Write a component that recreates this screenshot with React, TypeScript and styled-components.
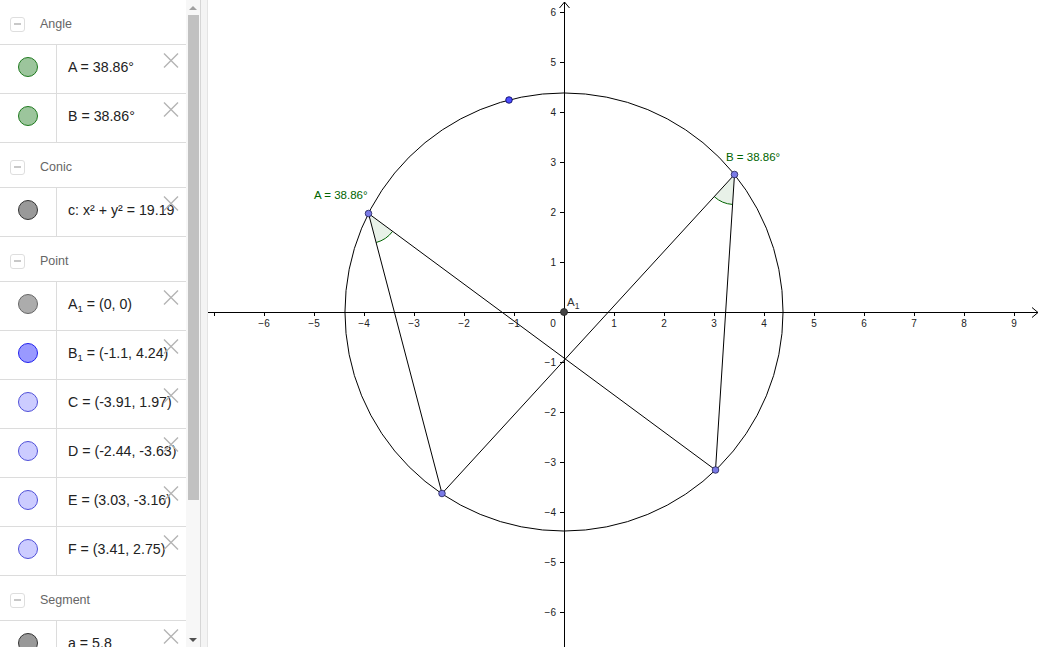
import React from "react";
import styled, { createGlobalStyle } from "styled-components";

const Global = createGlobalStyle`
  html, body { margin: 0; padding: 0; background: #fff; }
  body { font-family: "Liberation Sans", Arial, sans-serif; overflow: hidden; }
  #root { width: 1040px; height: 647px; }
`;

const Page = styled.div`
  display: flex;
  width: 1040px;
  height: 647px;
  overflow: hidden;
  background: #fff;
`;

const Sidebar = styled.div`
  display: flex;
  width: 200px;
  height: 100%;
  flex-shrink: 0;
`;

const List = styled.div`
  width: 186px;
  height: 100%;
  overflow: hidden;
  display: flex;
  flex-direction: column;
`;

const GroupHeader = styled.div`
  display: flex;
  align-items: center;
  height: 45px;
  padding: 4px 0 0 10px;
  box-sizing: border-box;
  border-bottom: 1px solid #dcdcdc;
  flex-shrink: 0;
`;

const CollapseBox = styled.div`
  width: 15px;
  height: 15px;
  box-sizing: border-box;
  border: 1px solid #dedede;
  border-radius: 3px;
  display: flex;
  align-items: center;
  justify-content: center;
  &::after {
    content: "";
    width: 7px;
    height: 1.5px;
    background: #c8c8c8;
  }
`;

const GroupLabel = styled.span`
  margin-left: 15px;
  font-size: 12.5px;
  color: #666;
`;

const Row = styled.div`
  position: relative;
  display: flex;
  height: 49px;
  box-sizing: border-box;
  border-bottom: 1px solid #dcdcdc;
  flex-shrink: 0;
`;

const MarkerCell = styled.div`
  width: 57px;
  box-sizing: border-box;
  border-right: 1px solid #dcdcdc;
  display: flex;
  align-items: center;
  justify-content: center;
  padding-bottom: 4px;
`;

const Marker = styled.div<{ $fill: string; $stroke: string }>`
  width: 20px;
  height: 20px;
  box-sizing: border-box;
  border-radius: 50%;
  background: ${(p) => p.$fill};
  border: 1.3px solid ${(p) => p.$stroke};
`;

const ValueCell = styled.div`
  flex: 1;
  display: flex;
  align-items: center;
  padding: 0 0 4px 11px;
  font-size: 14.2px;
  color: #222;
  white-space: nowrap;
`;

const Value = styled.span`
  display: inline;
`;

const Sub = styled.sub`
  font-size: 9.5px;
  vertical-align: -3px;
  line-height: 0;
`;

const DeleteBtn = styled.svg`
  position: absolute;
  right: 7px;
  top: 8px;
  width: 16px;
  height: 15px;
`;

const ScrollBar = styled.div`
  width: 14px;
  height: 100%;
  display: flex;
  flex-direction: column;
  background: #f7f7f7;
  box-sizing: border-box;
`;

const ScrollButton = styled.div<{ $down?: boolean }>`
  height: 15px;
  display: flex;
  align-items: center;
  justify-content: center;
  flex-shrink: 0;
  &::after {
    content: "";
    width: 0;
    height: 0;
    border-left: 4px solid transparent;
    border-right: 4px solid transparent;
    ${(p) =>
      p.$down
        ? "border-top: 4px solid #505050;"
        : "border-bottom: 4px solid #a0a0a0;"}
  }
`;

const Track = styled.div`
  flex: 1;
  display: flex;
  flex-direction: column;
  padding: 0 1px 0 2px;
`;

const Thumb = styled.div`
  height: 485px;
  background: #c1c1c1;
`;

const Divider = styled.div`
  width: 8px;
  height: 100%;
  flex-shrink: 0;
  box-sizing: border-box;
  border-left: 1px solid #d6d6d6;
  border-right: 1px solid #e4e4e4;
  background: #f4f4f4;
`;

const Graphics = styled.div`
  flex: 1;
  height: 100%;
  background: #fff;
  svg {
    display: block;
  }
`;

type Item = {
  fill: string;
  stroke: string;
  content: React.ReactNode;
};

type Group = { name: string; items: Item[] };

const angleM = { fill: "#9cc59c", stroke: "#1f7a1f" };
const darkM = { fill: "#999999", stroke: "#333333" };
const ptGray = { fill: "#acacac", stroke: "#666666" };
const ptBlue = { fill: "#9999ff", stroke: "#2222ee" };
const ptLight = { fill: "#ccccff", stroke: "#5050d8" };

const groups: Group[] = [
  {
    name: "Angle",
    items: [
      { ...angleM, content: "A = 38.86°" },
      { ...angleM, content: "B = 38.86°" },
    ],
  },
  {
    name: "Conic",
    items: [{ ...darkM, content: "c: x² + y² = 19.19" }],
  },
  {
    name: "Point",
    items: [
      {
        ...ptGray,
        content: (
          <>
            A<Sub>1</Sub> = (0, 0)
          </>
        ),
      },
      {
        ...ptBlue,
        content: (
          <>
            B<Sub>1</Sub> = (-1.1, 4.24)
          </>
        ),
      },
      { ...ptLight, content: "C = (-3.91, 1.97)" },
      { ...ptLight, content: "D = (-2.44, -3.63)" },
      { ...ptLight, content: "E = (3.03, -3.16)" },
      { ...ptLight, content: "F = (3.41, 2.75)" },
    ],
  },
  {
    name: "Segment",
    items: [
      { ...darkM, content: "a = 5.8" },
      { ...darkM, content: "b = 6.06" },
    ],
  },
];

const DeleteIcon = () => (
  <DeleteBtn viewBox="0 0 16 15">
    <path d="M1 0.5 L15 14.5 M15 0.5 L1 14.5" stroke="#b4b4b4" strokeWidth="1.4" fill="none" />
  </DeleteBtn>
);

const AlgebraView = () => (
  <List>
    {groups.map((g) => (
      <React.Fragment key={g.name}>
        <GroupHeader>
          <CollapseBox />
          <GroupLabel>{g.name}</GroupLabel>
        </GroupHeader>
        {g.items.map((it, i) => (
          <Row key={i}>
            <MarkerCell>
              <Marker $fill={it.fill} $stroke={it.stroke} />
            </MarkerCell>
            <ValueCell>
              <Value>{it.content}</Value>
            </ValueCell>
            <DeleteIcon />
          </Row>
        ))}
      </React.Fragment>
    ))}
  </List>
);

const W = 832;
const H = 647;
const OX = 356;
const OY = 312;
const S = 50;
const X = (x: number) => OX + S * x;
const Y = (y: number) => OY - S * y;

type P = [number, number];
const C: P = [X(-3.91), Y(1.97)];
const D: P = [X(-2.44), Y(-3.63)];
const E: P = [X(3.03), Y(-3.16)];
const F: P = [X(3.41), Y(2.75)];
const B1: P = [X(-1.1), Y(4.24)];
const R = Math.sqrt(19.19) * S;

function sectorPaths(c: P, p1: P, p2: P, r: number) {
  const a1 = Math.atan2(p1[1] - c[1], p1[0] - c[0]);
  const a2 = Math.atan2(p2[1] - c[1], p2[0] - c[0]);
  const x1 = c[0] + r * Math.cos(a1);
  const y1 = c[1] + r * Math.sin(a1);
  const x2 = c[0] + r * Math.cos(a2);
  const y2 = c[1] + r * Math.sin(a2);
  return {
    fill: `M${c[0]},${c[1]} L${x1},${y1} A${r},${r} 0 0 1 ${x2},${y2} Z`,
    arc: `M${x1},${y1} A${r},${r} 0 0 1 ${x2},${y2}`,
  };
}

const fmt = (n: number) => (n < 0 ? `\u2212${-n}` : `${n}`);

const GraphView = () => {
  const sA = sectorPaths(C, E, D, 30);
  const sB = sectorPaths(F, E, D, 30);
  const xs: number[] = [];
  for (let i = -7; i <= 9; i++) if (i !== 0) xs.push(i);
  const ys: number[] = [];
  for (let i = -6; i <= 6; i++) if (i !== 0) ys.push(i);
  const font = '"Liberation Sans", Arial, sans-serif';
  return (
    <svg width={W} height={H} viewBox={`0 0 ${W} ${H}`}>
      {/* angle sectors */}
      <path d={sA.fill} fill="#006400" fillOpacity={0.09} />
      <path d={sB.fill} fill="#006400" fillOpacity={0.09} />
      <path d={sA.arc} fill="none" stroke="#006400" strokeWidth={1} />
      <path d={sB.arc} fill="none" stroke="#006400" strokeWidth={1} />

      {/* axes */}
      <g stroke="#000" strokeWidth={1} fill="none">
        <line x1={0} y1={OY + 0.5} x2={W - 2} y2={OY + 0.5} />
        <polyline points={`${W - 8},${OY - 4.5} ${W - 2},${OY + 0.5} ${W - 8},${OY + 5.5}`} />
        <line x1={OX + 0.5} y1={2} x2={OX + 0.5} y2={H} />
        <polyline points={`${OX - 4.5},${8} ${OX + 0.5},${2} ${OX + 5.5},${8}`} />
        {xs.map((i) => (
          <line key={`xt${i}`} x1={X(i) + 0.5} y1={OY} x2={X(i) + 0.5} y2={OY + 4} />
        ))}
        {ys.map((i) => (
          <line key={`yt${i}`} x1={OX - 4} y1={Y(i) + 0.5} x2={OX} y2={Y(i) + 0.5} />
        ))}
      </g>
      <g fontFamily={font} fontSize={10} fill="#222">
        {xs
          .filter((i) => i !== -7)
          .map((i) => (
            <text key={`xl${i}`} x={X(i)} y={OY + 15} textAnchor="middle">
              {fmt(i)}
            </text>
          ))}
        <text x={OX - 11} y={OY + 15} textAnchor="middle">
          0
        </text>
        {ys.map((i) => (
          <text key={`yl${i}`} x={OX - 8} y={Y(i) + 4} textAnchor="end">
            {fmt(i)}
          </text>
        ))}
      </g>

      {/* circle */}
      <circle cx={OX} cy={OY} r={R} fill="none" stroke="#000" strokeWidth={1} />

      {/* segments */}
      <g stroke="#000" strokeWidth={1}>
        <line x1={C[0]} y1={C[1]} x2={D[0]} y2={D[1]} />
        <line x1={C[0]} y1={C[1]} x2={E[0]} y2={E[1]} />
        <line x1={D[0]} y1={D[1]} x2={F[0]} y2={F[1]} />
        <line x1={F[0]} y1={F[1]} x2={E[0]} y2={E[1]} />
      </g>

      {/* labels */}
      <g fontFamily={font} fontSize={11.5} fill="#006400">
        <text x={106} y={199}>A = 38.86°</text>
        <text x={518} y={161}>B = 38.86°</text>
      </g>
      <text x={OX + 3} y={OY - 6} fontFamily={font} fontSize={11.5} fill="#333">
        A
        <tspan fontSize={8.5} dy={3}>
          1
        </tspan>
      </text>

      {/* points */}
      <circle cx={OX} cy={OY} r={3.5} fill="#444" stroke="#222" strokeWidth={0.8} />
      <circle cx={B1[0]} cy={B1[1]} r={3.3} fill="#4d4dff" stroke="#000055" strokeWidth={0.8} />
      {[C, D, E, F].map((p, i) => (
        <circle key={i} cx={p[0]} cy={p[1]} r={3.3} fill="#7a7ae6" stroke="#222255" strokeWidth={0.8} />
      ))}
    </svg>
  );
};

export default function App() {
  return (
    <>
      <Global />
      <Page>
        <Sidebar>
          <AlgebraView />
          <ScrollBar>
            <ScrollButton />
            <Track>
              <Thumb />
            </Track>
            <ScrollButton $down />
          </ScrollBar>
        </Sidebar>
        <Divider />
        <Graphics>
          <GraphView />
        </Graphics>
      </Page>
    </>
  );
}
